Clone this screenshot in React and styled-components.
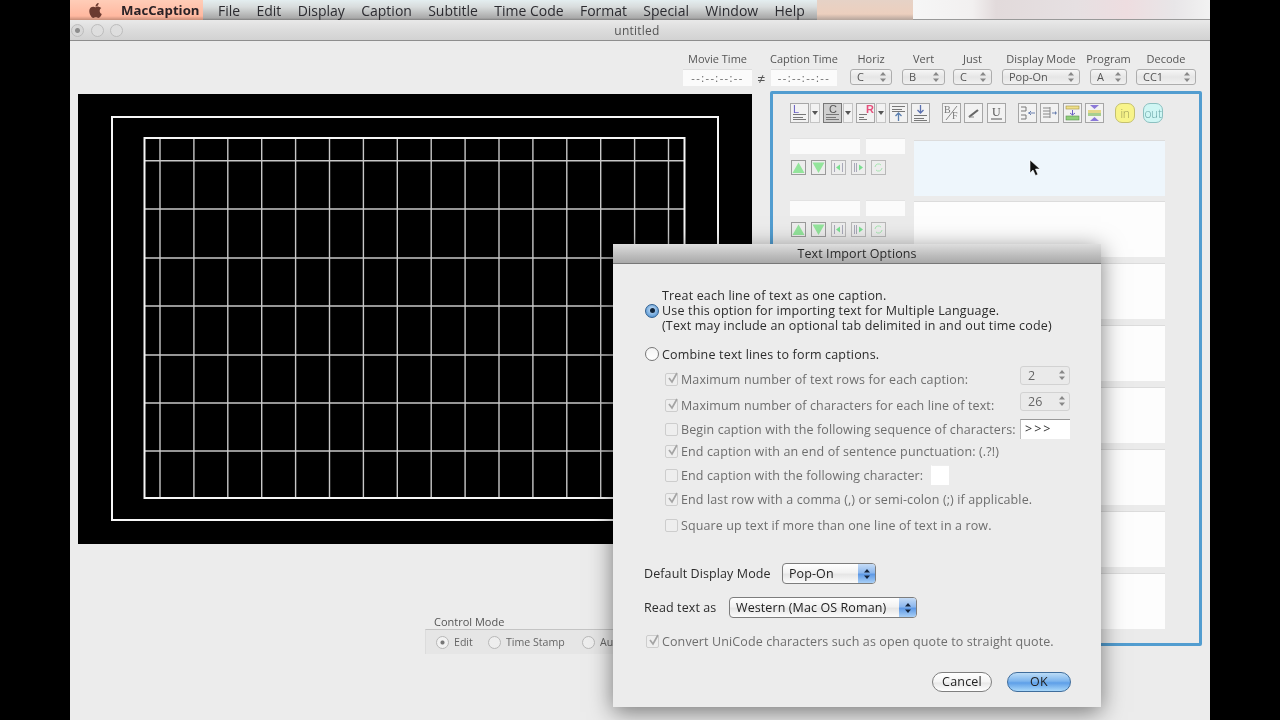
import React from 'react';
import styled, { createGlobalStyle } from 'styled-components';
import { FaApple } from 'react-icons/fa';

const Global = createGlobalStyle`
  html, body { margin: 0; padding: 0; background: #000; }
  body { font-family: "Open Sans", "Noto Sans", "Liberation Sans", sans-serif; }
`;

const Page = styled.div`
  width: 1280px; height: 720px; background: #000; display: flex; justify-content: center; overflow: hidden;
  filter: blur(0.4px);
`;
const Screen = styled.div`
  width: 1140px; height: 720px; position: relative; display: flex; flex-direction: column; background: #ececec; overflow: hidden;
`;

/* menu bar */
const MenuBar = styled.div`
  height: 20px; flex: none; display: flex; align-items: center; box-sizing: border-box;
  background: linear-gradient(#e4eef0 0%, #d8dcdc 35%, #a9a9a9 90%, #7f7f7f 100%);
`;
const AppMenu = styled.div`
  width: 133px; height: 20px; flex: none; display: flex; align-items: center; box-sizing: border-box; padding-left: 17px; gap: 17px;
  background: linear-gradient(#ffcdb8, #ffb8a0 80%, #c78d78);
`;
const AppName = styled.span`font-size: 13.2px; font-weight: 700; color: #2a2226; white-space: nowrap;`;
const MenuItems = styled.div`
  flex: none; width: 614px; display: flex; padding-left: 15px; box-sizing: border-box; gap: 16.3px; font-size: 14px; color: #2b2b30; white-space: nowrap;
`;
const MenuSalmon = styled.div`
  width: 96px; height: 20px; flex: none;
  background: linear-gradient(#e6d2c6, #eccfbe 70%, #b5a59c);
`;
const MenuFade = styled.div`
  flex: 1; height: 20px;
  background: linear-gradient(90deg, #f6f6f6 0, #f2f0f0 20%, #e2dadb 28%, #e6e0e2 55%, #eedde0 72%, #e8e6e8 88%, #f2f2f2 100%);
  border-bottom: 1px solid #999; box-sizing: border-box;
`;

/* window title */
const TitleBar = styled.div`
  height: 21px; flex: none; box-sizing: border-box; display: flex; align-items: center; padding-left: 1px;
  background: linear-gradient(#e9e9e9, #dcdcdc 50%, #d2d2d2); border-bottom: 1px solid #8e8e8e;
`;
const Lights = styled.div`display: flex; gap: 6.5px;`;
const Light = styled.span`
  width: 11px; height: 11px; border-radius: 50%; border: 1px solid #bcbcbc; background: ${p => p.$dot ? 'radial-gradient(circle, #8e8e8e 0 2px, #d8d8d8 3px)' : '#dedede'};
`;
const WinTitle = styled.span`flex: 1; text-align: center; font-size: 12px; color: #555; letter-spacing: .25px; margin-left: -53px; margin-right: 6px;`;

/* window body */
const Body = styled.div`flex: 1; display: flex; flex-direction: column; min-height: 0;`;
const TopFields = styled.div`
  height: 50px; flex: none; box-sizing: border-box; display: flex; align-items: flex-start; padding: 11px 0 0 613px;
`;
const Field = styled.div`
  width: ${p => p.$w}px; margin-right: ${p => p.$gap || 0}px; flex: none; display: flex; flex-direction: column; align-items: center; gap: 3px;
`;
const FieldLabel = styled.span`font-size: 11px; line-height: 14px; color: #555; white-space: nowrap;`;
const TimeInput = styled.div`
  width: 100%; height: 17px; box-sizing: border-box; background: #fbfbfb; border-top: 1px solid #dedede; font-size: 11px; line-height: 16px; color: #666; text-align: center; letter-spacing: 1.4px; white-space: nowrap;
`;
const NotEq = styled.span`width: 19px; margin-top: 18px; flex: none; text-align: center; font-size: 14px; color: #555; line-height: 17px;`;
const MiniSelect = styled.div`
  width: 100%; height: 16px; box-sizing: border-box; display: flex; align-items: center; justify-content: space-between; padding: 0 5px 0 6px;
  border: 1px solid #adadad; border-radius: 3px; background: linear-gradient(#f6f6f6, #e6e6e6 50%, #f0f0f0);
  font-size: 11px; color: #555; line-height: 14px;
`;
const Main = styled.div`flex: 1; display: flex; padding-left: 8px; min-height: 0;`;
const LeftCol = styled.div`width: 674px; flex: none; display: flex; flex-direction: column; padding-top: 3px;`;
const Video = styled.div`width: 674px; height: 450px; background: #000; flex: none; display: flex;`;
const ControlMode = styled.div`margin: 71px 0 0 347px; width: 330px; display: flex; flex-direction: column;`;
const ControlLabel = styled.span`font-size: 11px; line-height: 14px; color: #555; padding-left: 9px;`;
const ControlGroup = styled.div`
  height: 25px; box-sizing: border-box; display: flex; align-items: center; padding-left: 10px;
  border-top: 1px solid #c4c4c4; border-left: 1px solid #dcdcdc; background: #e6e6e6; font-size: 10.6px; color: #666; white-space: nowrap;
`;
const CtrlRadio = styled.span`
  width: 11px; height: 11px; flex: none; border-radius: 50%; border: 1px solid #b8b8b8; background: ${p => p.$on ? 'radial-gradient(circle, #777 0 1.5px, #f2f2f2 2.5px)' : '#eeeeee'};
  margin-right: 5px;
`;
const CtrlText = styled.span`width: ${p => p.$w}px; flex: none;`;

/* captions panel */
const Panel = styled.div`
  width: 432px; height: 555px; margin-left: 18px; box-sizing: border-box; flex: none; border: 3px solid #529dd0; border-radius: 2px; padding: 9px 0 0 17px;
  display: flex; flex-direction: column; background: #ebebeb;
`;
const Toolbar = styled.div`display: flex; height: 20px; flex: none; margin-bottom: 15px;`;
const Tool = styled.div`
  width: 19px; height: 20px; flex: none; box-sizing: border-box; border: 1px solid ${p => p.$dark ? '#777' : '#a6a6a6'}; background: ${p => p.$dark ? '#cfcfcf' : '#f2f2f2'};
  margin-left: ${p => p.$ml || 0}px; display: flex;
`;
const Drop = styled(Tool)`width: 10px; margin-left: 1px; align-items: center; justify-content: center; border-color: #c4c4c4;`;
const Pill = styled.div`
  width: 20px; height: 20px; flex: none; box-sizing: border-box; border-radius: 7px; margin-left: ${p => p.$ml}px; display: flex; align-items: center; justify-content: center;
  font-size: 12px; font-weight: 300; letter-spacing: -.3px;
  background: ${p => p.$bg}; border: 1px solid ${p => p.$bd}; color: ${p => p.$fg};
`;
const CaptionRow = styled.div`display: flex; height: 62px; flex: none; box-sizing: border-box;`;
const RowLeft = styled.div`width: 124px; flex: none; display: flex; flex-direction: column;`;
const Inputs = styled.div`display: flex; gap: 6px; height: 16px;`;
const RowInput = styled.div`width: ${p => p.$w}px; height: 16px; background: #fbfbfb; border-top: 1px solid #e2e2e2; box-sizing: border-box;`;
const RowBtns = styled.div`display: flex; gap: 5px; margin: 6px 0 0 1px;`;
const RowBtn = styled.div`width: 15px; height: 15px; box-sizing: border-box; border: 1px solid ${p => p.$dark ? '#9a9a9a' : '#b8b8b8'}; background: #ededed; display: flex;`;
const CaptionText = styled.div`
  width: 251px; height: 56px; margin-top: ${p => p.$active ? 2 : 1}px; box-sizing: border-box; flex: none; border-top: 1px solid #dcdcdc; background: ${p => p.$active ? '#eef6fc' : '#fdfdfd'};
`;

/* dialog */
const Dialog = styled.div`
  position: absolute; left: 543px; top: 244px; width: 488px; height: 463px; display: flex; flex-direction: column;
  background: #ececec; box-shadow: 0 5px 22px rgba(0,0,0,.5); font-size: 12.5px; color: #2c2c2c;
`;
const DlgTitle = styled.div`
  height: 20px; flex: none; box-sizing: border-box; text-align: center; line-height: 19px; color: #2a2a2a; letter-spacing: .1px;
  background: linear-gradient(#dedede, #bdbdbd 60%, #a9a9a9); border-bottom: 1px solid #777;
`;
const DlgBody = styled.div`flex: 1; display: flex; flex-direction: column; padding: 24px 31px 0 32px; min-height: 0;`;
const RadioRow = styled.div`display: flex; align-items: center; margin-top: ${p => p.$mt || 0}px; height: ${p => p.$h}px; gap: 3px; letter-spacing: .17px; white-space: nowrap;`;
const Radio = styled.span`
  width: 14px; height: 14px; box-sizing: border-box; flex: none; border-radius: 50%; display: flex; align-items: center; justify-content: center;
  border: 1px solid ${p => p.$on ? '#2f5f90' : '#777'};
  background: ${p => p.$on ? 'radial-gradient(circle at 50% 40%, #d0e4f8, #5d9bd6 75%)' : 'linear-gradient(#f4f4f4, #ffffff)'};
`;
const RadioDot = styled.span`width: 5px; height: 5px; border-radius: 50%; background: #10243a;`;
const RadioText = styled.div`line-height: 15px;`;
const Options = styled.div`display: flex; flex-direction: column; padding-left: 20px; margin-top: 2px; color: #6e6e6e; letter-spacing: .12px;`;
const OptRow = styled.div`display: flex; align-items: center; height: ${p => p.$h}px; gap: 3px;`;
const OptLabel = styled.span`flex: ${p => p.$grow ? 1 : 'none'}; white-space: nowrap;`;
const Check = styled.span`
  width: 13px; height: 13px; box-sizing: border-box; flex: none; border: 1px solid #cdcdcd; border-radius: 2px; background: #eeeeee; display: flex; overflow: visible;
  margin-left: ${p => p.$ml || 0}px;
`;
const Stepper = styled.div`
  width: 50px; height: 19px; box-sizing: border-box; flex: none; display: flex; align-items: center; justify-content: space-between; padding: 0 4px 0 7px; margin-bottom: 8px;
  border: 1px solid #d2d2d2; border-radius: 3px; background: #eaeaea; font-size: 12.5px; color: #666;
`;
const SmallInput = styled.div`
  width: ${p => p.$w}px; height: 20px; box-sizing: border-box; flex: none; background: #fff; margin-left: ${p => p.$w > 30 ? 0 : 5}px;
  border-top: 1px solid ${p => p.$w > 30 ? '#999' : '#eee'}; border-left: 1px solid ${p => p.$w > 30 ? '#bbb' : '#fff'};
  font-size: 12.5px; padding-left: 4px; line-height: 18px; color: #333; letter-spacing: 2px;
`;
const SelectRow = styled.div`display: flex; align-items: center; margin: ${p => p.$mt}px 0 0 -1px; letter-spacing: .1px; white-space: nowrap;`;
const SelectLabel = styled.span`width: ${p => p.$w}px; flex: none; color: #2c2c2c;`;
const BlueSelect = styled.div`
  width: ${p => p.$w}px; height: 21px; box-sizing: border-box; flex: none; display: flex; align-items: center; justify-content: space-between;
  border: 1px solid #7d7d7d; border-radius: 4px; background: linear-gradient(#ffffff, #f2f2f2 45%, #e6e6e6 55%, #fbfbfb); overflow: hidden; padding-left: 6px; color: #222;
`;
const BlueCap = styled.span`
  width: 17px; height: 100%; flex: none; display: flex; align-items: center; justify-content: center;
  background: linear-gradient(#c6dcf6, #8db8ee 45%, #5f9ae6 55%, #a8cff6);
`;
const ConvertRow = styled.div`display: flex; align-items: center; height: 20px; margin-top: 13px; gap: 3px; color: #6e6e6e; letter-spacing: .11px; white-space: nowrap;`;
const Buttons = styled.div`display: flex; justify-content: flex-end; gap: 15px; margin: 21px -1px 0 0;`;
const PushBtn = styled.div`
  width: ${p => p.$w}px; height: 20px; box-sizing: border-box; border-radius: 10px; text-align: center; line-height: 18px; color: #222; letter-spacing: .2px;
  border: 1px solid ${p => p.$primary ? '#3f6d9c' : '#7f7f7f'};
  background: ${p => p.$primary ? 'linear-gradient(#bcdcf6, #7db5ee 45%, #5e9fe8 55%, #a9d8fa)' : 'linear-gradient(#fff, #f4f4f4 50%, #e8e8e8 55%, #fff)'};
`;
const Cursor = styled.svg`position: absolute; left: 959px; top: 159px;`;

/* drawings */
const Updown = ({ c = '#777' }) => (
  <svg width="6" height="10" viewBox="0 0 6 10"><path d="M3 0 6 3.5H0zM3 10 0 6.5H6z" fill={c} /></svg>
);
const Tri = () => <svg width="6" height="4" viewBox="0 0 6 4" style={{ margin: 'auto' }}><path d="M0 0H6L3 4z" fill="#555" /></svg>;

const Lines = ({ x = 2, w = 13, y = 9, n = 3, gap = 2.5 }) => (
  <g stroke="#777" strokeWidth="1">
    {Array.from({ length: n }, (_, i) => <path key={i} d={`M${x} ${Math.round(y + i * gap) + .5}h${i % 2 ? w - 3 : w}`} />)}
  </g>
);
const S = ({ children }) => <svg width="17" height="18" viewBox="0 0 17 18">{children}</svg>;
const Letter = ({ x, y = 9, c, children, s = 11, serif, bold }) => (
  <text x={x} y={y} fontSize={s} fontWeight={bold ? 700 : 400} fontFamily={serif ? 'Liberation Serif, serif' : 'Liberation Sans, sans-serif'} fill={c}>{children}</text>
);

const AlignL = () => <S><Letter x="2" c="#6a5fc4">L</Letter><Lines y={10} n={3} /></S>;
const AlignC = () => <S><Letter x="5" c="#555">C</Letter><Lines y={10} n={3} /></S>;
const AlignR = () => <S><Letter x="9" c="#e6507c" bold>R</Letter><Lines y={10} w={8} n={3} /></S>;
const VTop = () => <S><Lines y={2} n={3} /><path d="M8.5 17V9M5.5 12l3-3 3 3" stroke="#5a7fb0" fill="none" strokeWidth="1.3" /></S>;
const VBot = () => <S><path d="M8.5 1v8M5.5 6l3 3 3-3" stroke="#5a70b0" fill="none" strokeWidth="1.3" /><Lines y={11} /></S>;
const BF = () => <S><Letter x="1" y="9" c="#777" s="10" serif>B</Letter><path d="M3 16 14 2" stroke="#888" /><Letter x="9" y="15" c="#777" s="10" serif>F</Letter></S>;
const Slash = () => <S><path d="M4 13 13 6" stroke="#666" strokeWidth="2.2" /><path d="M4 13h5" stroke="#888" /></S>;
const Under = () => <S><Letter x="4" y="12" c="#555" s="12" serif>U</Letter><path d="M3 15h11" stroke="#555" /></S>;
const Merge = () => <S><path d="M2 3h5v4H2M2 11h5v4H2" stroke="#777" fill="none" /><path d="M9 9h7M12 7l-2 2 2 2" stroke="#6a80b0" fill="none" /></S>;
const Split = () => <S><path d="M2 4h7M2 7h7M2 10h7M2 13h7" stroke="#888" /><path d="M9 3v11" stroke="#888" /><path d="M11 9h3" stroke="#6a80b0" /><path d="M14 7l2 2-2 2z" fill="#6a80b0" /></S>;
const BlockA = () => <S><rect x="2" y="2" width="13" height="3" fill="#efe08a" stroke="#a09040" strokeWidth=".6" /><path d="M8.5 6v5M6 9l2.5 2L11 9" stroke="#6a5fc4" fill="none" /><rect x="2" y="12" width="13" height="4" fill="#8fcf7a" stroke="#5a9050" strokeWidth=".6" /></S>;
const BlockB = () => <S><path d="M4 1h9l-4.5 4zM4 17h9l-4.5-4z" fill="#8a78d8" /><rect x="2" y="6" width="13" height="3" fill="#e6d88a" /><rect x="2" y="9" width="13" height="3" fill="#a8cf90" /></S>;

const UpG = () => <svg width="13" height="13" viewBox="0 0 13 13"><path d="M6.5 1.5 12.5 12H.5z" fill="#93e49b" /></svg>;
const DownG = () => <svg width="13" height="13" viewBox="0 0 13 13"><path d="M6.5 12 12.5 1.5H.5z" fill="#93e49b" /></svg>;
const PrevG = () => <svg width="13" height="13" viewBox="0 0 13 13"><path d="M2.5 2v9M10.5 2v9" stroke="#a8a8b8" /><path d="M4 6.5 8 3.5v6z" fill="#7adf90" /></svg>;
const NextG = () => <svg width="13" height="13" viewBox="0 0 13 13"><path d="M2.5 2v9M4.5 2v9" stroke="#a8a8b8" /><path d="M11 6.5 7 3.5v6z" fill="#7adf90" /></svg>;
const LoopG = () => <svg width="13" height="13" viewBox="0 0 13 13"><path d="M3 6a3.5 3.5 0 0 1 6-2M10 7a3.5 3.5 0 0 1-6 2" stroke="#a5e6b0" fill="none" /></svg>;

const Tick = () => (
  <svg width="14" height="14" viewBox="0 0 14 14" style={{ margin: '-3px 0 0 0', flex: 'none' }}>
    <path d="M3 7l3 4 5-9" stroke="#a4a4a4" strokeWidth="1.7" fill="none" />
  </svg>
);

const VLINES = Array.from({ length: 16 }, (_, i) => 82 + i * 33.9);
const HLINES = [66.7, 115, 164, 212, 261, 309, 357];

const GridChart = () => (
  <svg width="674" height="450" viewBox="0 0 674 450">
    <rect x="34" y="23" width="606" height="403" fill="none" stroke="#f6f6f6" strokeWidth="2" />
    <g stroke="#c8c8c8" strokeWidth="1.4">
      {VLINES.map(x => <line key={x} x1={x} x2={x} y1="44" y2="404" />)}
      {HLINES.map(y => <line key={y} x1="66" x2="607" y1={y} y2={y} />)}
    </g>
    <rect x="66.5" y="44" width="540" height="360" fill="none" stroke="#f6f6f6" strokeWidth="2" />
  </svg>
);

const FIELDS = [
  { label: 'Horiz', value: 'C', w: 42, gap: 10 },
  { label: 'Vert', value: 'B', w: 43, gap: 8 },
  { label: 'Just', value: 'C', w: 39, gap: 10 },
  { label: 'Display Mode', value: 'Pop-On', w: 78, gap: 10 },
  { label: 'Program', value: 'A', w: 37, gap: 9 },
  { label: 'Decode', value: 'CC1', w: 60, gap: 0 },
];
const MENUS = ['File', 'Edit', 'Display', 'Caption', 'Subtitle', 'Time Code', 'Format', 'Special', 'Window', 'Help'];
const OPTIONS = [
  { h: 26, on: true, text: 'Maximum number of text rows for each caption:', step: '2' },
  { h: 26, on: true, text: 'Maximum number of characters for each line of text:', step: '26' },
  { h: 22, text: 'Begin caption with the following sequence of characters:', input: { w: 50, v: '>>>' } },
  { h: 22, on: true, text: 'End caption with an end of sentence punctuation:  (.?!)' },
  { h: 26, text: 'End caption with the following character:', input: { w: 18, v: '' }, inline: true },
  { h: 22, on: true, text: 'End last row with a comma (,) or semi-colon (;) if applicable.' },
  { h: 30, text: 'Square up text if more than one line of text in a row.' },
];

const Caption = ({ active, btns }) => (
  <CaptionRow>
    <RowLeft>
      <Inputs><RowInput $w={70} /><RowInput $w={39} /></Inputs>
      {btns && (
        <RowBtns>
          <RowBtn $dark><UpG /></RowBtn><RowBtn $dark><DownG /></RowBtn><RowBtn><PrevG /></RowBtn><RowBtn><NextG /></RowBtn><RowBtn><LoopG /></RowBtn>
        </RowBtns>
      )}
    </RowLeft>
    <CaptionText $active={active} />
  </CaptionRow>
);

export default function App() {
  return (
    <Page>
      <Global />
      <Screen>
        <MenuBar>
          <AppMenu>
            <FaApple size={17} color="#6b3a30" />
            <AppName>MacCaption</AppName>
          </AppMenu>
          <MenuItems>{MENUS.map(m => <span key={m}>{m}</span>)}</MenuItems>
          <MenuSalmon />
          <MenuFade />
        </MenuBar>
        <TitleBar>
          <Lights><Light $dot /><Light /><Light /></Lights>
          <WinTitle>untitled</WinTitle>
        </TitleBar>
        <Body>
          <TopFields>
            <Field $w={69}><FieldLabel>Movie Time</FieldLabel><TimeInput>--:--:--:--</TimeInput></Field>
            <NotEq>≠</NotEq>
            <Field $w={66} $gap={13}><FieldLabel>Caption Time</FieldLabel><TimeInput>--:--:--:--</TimeInput></Field>
            {FIELDS.map(f => (
              <Field key={f.label} $w={f.w} $gap={f.gap}>
                <FieldLabel>{f.label}</FieldLabel>
                <MiniSelect><span>{f.value}</span><Updown c="#888" /></MiniSelect>
              </Field>
            ))}
          </TopFields>
          <Main>
            <LeftCol>
              <Video><GridChart /></Video>
              <ControlMode>
                <ControlLabel>Control Mode</ControlLabel>
                <ControlGroup>
                  <CtrlRadio $on /><CtrlText $w={34}>Edit</CtrlText>
                  <CtrlRadio /><CtrlText $w={76}>Time Stamp</CtrlText>
                  <CtrlRadio /><CtrlText $w={40}>Auto</CtrlText>
                </ControlGroup>
              </ControlMode>
            </LeftCol>
            <Panel>
              <Toolbar>
                <Tool><AlignL /></Tool><Drop><Tri /></Drop>
                <Tool $ml={3} $dark><AlignC /></Tool><Drop><Tri /></Drop>
                <Tool $ml={3}><AlignR /></Tool><Drop><Tri /></Drop>
                <Tool $ml={3}><VTop /></Tool>
                <Tool $ml={3}><VBot /></Tool>
                <Tool $ml={12}><BF /></Tool>
                <Tool $ml={3}><Slash /></Tool>
                <Tool $ml={4}><Under /></Tool>
                <Tool $ml={12}><Merge /></Tool>
                <Tool $ml={3}><Split /></Tool>
                <Tool $ml={4}><BlockA /></Tool>
                <Tool $ml={3}><BlockB /></Tool>
                <Pill $ml={11} $bg="#f8f48a" $bd="#c4c070" $fg="#9a9a58">in</Pill>
                <Pill $ml={8} $bg="#cff6f4" $bd="#8cc0c0" $fg="#6aa6a8">out</Pill>
              </Toolbar>
              <Caption active btns />
              <Caption btns />
              <Caption />
              <Caption />
              <Caption />
              <Caption />
              <Caption />
              <Caption />
            </Panel>
          </Main>
        </Body>
        <Cursor width="12" height="18" viewBox="0 0 12 18"><path d="M1 1v13l3-3 2.5 5.5 2.4-1L6.5 10H11z" fill="#111" stroke="#fff" strokeWidth=".6" /></Cursor>
        <Dialog>
          <DlgTitle>Text Import Options</DlgTitle>
          <DlgBody>
            <RadioRow $h={45}>
              <Radio $on><RadioDot /></Radio>
              <RadioText>
                Treat each line of text as one caption.<br />
                Use this option for importing text for Multiple Language.<br />
                (Text may include an optional tab delimited in and out time code)
              </RadioText>
            </RadioRow>
            <RadioRow $h={20} $mt={11}>
              <Radio /><span>Combine text lines to form captions.</span>
            </RadioRow>
            <Options>
              {OPTIONS.map(o => (
                <OptRow key={o.text} $h={o.h}>
                  <Check>{o.on && <Tick />}</Check>
                  <OptLabel $grow={!o.inline}>{o.text}</OptLabel>
                  {o.step && <Stepper><span>{o.step}</span><Updown c="#888" /></Stepper>}
                  {o.input && <SmallInput $w={o.input.w}>{o.input.v}</SmallInput>}
                </OptRow>
              ))}
            </Options>
            <SelectRow $mt={23}>
              <SelectLabel $w={138}>Default Display Mode</SelectLabel>
              <BlueSelect $w={94}><span>Pop-On</span><BlueCap><Updown c="#14243c" /></BlueCap></BlueSelect>
            </SelectRow>
            <SelectRow $mt={13}>
              <SelectLabel $w={85}>Read text as</SelectLabel>
              <BlueSelect $w={188}><span>Western (Mac OS Roman)</span><BlueCap><Updown c="#14243c" /></BlueCap></BlueSelect>
            </SelectRow>
            <ConvertRow>
              <Check $ml={1}><Tick /></Check>
              <span>Convert UniCode characters such as open quote to straight quote.</span>
            </ConvertRow>
            <Buttons>
              <PushBtn $w={60}>Cancel</PushBtn>
              <PushBtn $w={64} $primary>OK</PushBtn>
            </Buttons>
          </DlgBody>
        </Dialog>
      </Screen>
    </Page>
  );
}
